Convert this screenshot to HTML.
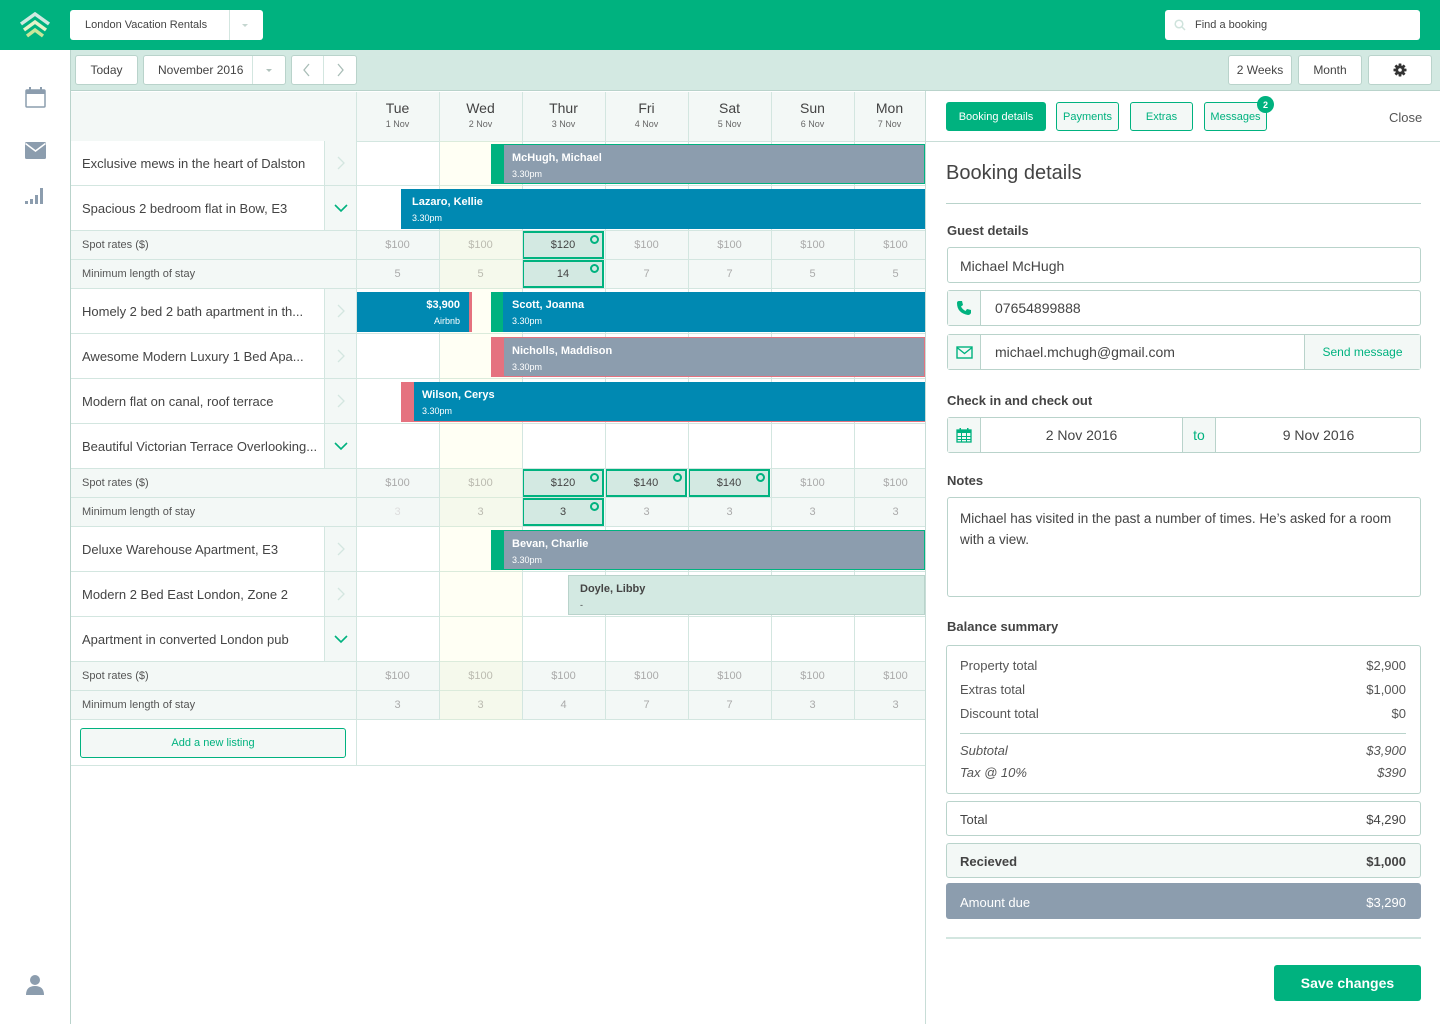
<!DOCTYPE html>
<html><head><meta charset="utf-8"><style>
*{box-sizing:border-box;margin:0;padding:0}
body{width:1440px;height:1024px;position:relative;overflow:hidden;font-family:"Liberation Sans",sans-serif;color:#444;background:#fff}
.a{position:absolute}
.btn{position:absolute;background:#fff;border:1px solid #b9d3cb;border-radius:3px;font-size:12px;color:#444;display:flex;align-items:center;justify-content:center}
.row{position:absolute;left:71px;width:854px;border-bottom:1px solid #d3e6e0}
.nm{position:absolute;left:0;top:0;width:254px;height:100%;background:#fff;font-size:13px;color:#444;padding-left:11px;display:flex;align-items:center;border-right:1px solid #d3e6e0;white-space:nowrap;overflow:hidden}
.ar{position:absolute;left:254px;top:0;width:31px;height:100%;background:#f3f8f6;display:flex;align-items:center;justify-content:center}
.sub{background:#f3f8f6}
.sub .lb{position:absolute;left:11px;top:0;height:100%;display:flex;align-items:center;font-size:11px;color:#555}
.vals{position:absolute;left:285px;top:0;height:100%;display:flex}
.vals span{width:83px;flex:none;display:flex;align-items:center;justify-content:center;font-size:11px;color:#aaa;position:relative}
.vals span.h{background:#d3e9e2;border:2px solid #00b27f;color:#444;height:28px;width:82px;margin-right:1px}
.vals span.h:after{content:"";position:absolute;right:3px;top:2px;width:5px;height:5px;border:2px solid #00b27f;border-radius:50%;background:#d3e9e2}
.bk{position:absolute;height:40px;color:#fff;padding-left:9px;font-size:11px;font-weight:bold;padding-top:7px}
.bk i{display:block;font-style:normal;font-weight:normal;font-size:9px;margin-top:5px}
.grey{background:#8c9dae}
.blue{background:#0089b2}
.tab{position:absolute;top:102px;height:29px;border:1px solid #00b27f;border-radius:3px;font-size:11px;color:#00b27f;background:#f3f8f6;display:flex;align-items:center;justify-content:center}
.lbl{position:absolute;left:947px;font-size:13px;font-weight:bold;color:#444}
.inp{position:absolute;left:947px;width:474px;border:1px solid #b9d3cb;border-radius:3px;background:#fff;font-size:14px;color:#444}
.ic{position:absolute;left:0;top:0;width:33px;height:100%;background:#f3f8f6;border-right:1px solid #b9d3cb;display:flex;align-items:center;justify-content:center}
.bl{position:absolute;left:960px;right:34px;font-size:13px;color:#555;display:flex;justify-content:space-between}
</style></head><body>

<div class="a" style="left:0;top:0;width:1440px;height:50px;background:#00b27f"></div>
<svg class="a" style="left:19px;top:12px" width="32" height="26" viewBox="0 0 32 26">
<path d="M2 12 L16 2 L30 12" fill="none" stroke="#cfe9e0" stroke-width="3.5"/>
<path d="M5 18 L16 10 L27 18" fill="none" stroke="#e6f3c8" stroke-width="3.5"/>
<path d="M8 24 L16 18 L24 24" fill="none" stroke="#c9e69a" stroke-width="3.5"/>
</svg>
<div class="btn" style="left:70px;top:10px;width:193px;height:30px;justify-content:flex-start;padding-left:15px;font-size:11px;border:none">London Vacation Rentals</div>
<div class="a" style="left:229px;top:10px;width:1px;height:30px;background:#d3e6e0"></div>
<div class="a" style="left:242px;top:24px;border-left:3px solid transparent;border-right:3px solid transparent;border-top:3px solid #c5d6d0"></div>
<div class="btn" style="left:1165px;top:10px;width:255px;height:30px;justify-content:flex-start;padding-left:30px;font-size:11px;border:none">Find a booking</div>
<svg class="a" style="left:1174px;top:19px" width="12" height="12"><circle cx="5" cy="5" r="3.8" fill="none" stroke="#cfe3dc" stroke-width="1.5"/><path d="M8 8 L11 11" stroke="#cfe3dc" stroke-width="1.5"/></svg>

<div class="a" style="left:70px;top:50px;width:1px;height:974px;background:#b9d3cb"></div>
<svg class="a" style="left:25px;top:86px" width="21" height="22" viewBox="0 0 21 22"><rect x="1" y="4" width="19" height="17" rx="1" fill="none" stroke="#8c9dae" stroke-width="1.5"/><rect x="1" y="4" width="19" height="4" fill="#8c9dae"/><rect x="4" y="1" width="2" height="5" fill="#8c9dae"/><rect x="15" y="1" width="2" height="5" fill="#8c9dae"/></svg>
<svg class="a" style="left:25px;top:142px" width="21" height="17" viewBox="0 0 21 17"><rect x="0" y="0" width="21" height="17" rx="1.5" fill="#8c9dae"/><path d="M0.5 1.5 L10.5 9 L20.5 1.5" fill="none" stroke="#fff" stroke-width="1.5"/></svg>
<svg class="a" style="left:25px;top:186px" width="21" height="18"><rect x="0" y="15" width="3" height="3" fill="#8c9dae"/><rect x="5" y="13" width="3" height="5" fill="#8c9dae"/><rect x="10" y="9" width="3" height="9" fill="#8c9dae"/><rect x="15" y="2" width="3" height="16" fill="#8c9dae"/></svg>
<svg class="a" style="left:25px;top:974px" width="20" height="22"><circle cx="10" cy="6" r="5" fill="#8c9dae"/><path d="M1 21 Q1 12 10 12 Q19 12 19 21 Z" fill="#8c9dae"/></svg>

<div class="a" style="left:71px;top:50px;width:1369px;height:41px;background:#d3e9e2;border-bottom:1px solid #b9d3cb"></div>
<div class="btn" style="left:75px;top:55px;width:63px;height:30px">Today</div>
<div class="btn" style="left:143px;top:55px;width:143px;height:30px;justify-content:flex-start;padding-left:14px">November 2016</div>
<div class="a" style="left:252px;top:56px;width:1px;height:28px;background:#d3e6e0"></div>
<div class="a" style="left:266px;top:69px;border-left:3px solid transparent;border-right:3px solid transparent;border-top:3px solid #b0c2bc"></div>
<div class="btn" style="left:291px;top:55px;width:66px;height:30px"></div>
<div class="a" style="left:323px;top:56px;width:1px;height:28px;background:#d3e6e0"></div>
<svg class="a" style="left:301px;top:63px" width="12" height="14"><path d="M8 1 L3 7 L8 13" fill="none" stroke="#a9bdb7" stroke-width="1.3"/></svg>
<svg class="a" style="left:335px;top:63px" width="12" height="14"><path d="M3 1 L8 7 L3 13" fill="none" stroke="#a9bdb7" stroke-width="1.3"/></svg>
<div class="btn" style="left:1228px;top:55px;width:64px;height:30px">2 Weeks</div>
<div class="btn" style="left:1298px;top:55px;width:64px;height:30px">Month</div>
<div class="btn" style="left:1368px;top:55px;width:64px;height:30px"><svg width="14" height="14" viewBox="0 0 14 14"><g fill="#333"><circle cx="7" cy="7" r="4.6"/><rect x="5.6" y="0.5" width="2.8" height="13" rx=".5"/><rect x="0.5" y="5.6" width="13" height="2.8" rx=".5"/><rect x="5.6" y="0.5" width="2.8" height="13" rx=".5" transform="rotate(45 7 7)"/><rect x="5.6" y="0.5" width="2.8" height="13" rx=".5" transform="rotate(-45 7 7)"/></g><circle cx="7" cy="7" r="1.8" fill="#fff"/></svg></div>

<div class="a" style="left:71px;top:92px;width:854px;height:50px;background:#f3f8f6;border-bottom:1px solid #d3e6e0"></div>
<div class="a" style="left:356px;top:100px;width:569px;display:flex;text-align:center">
<div style="width:83px"><div style="font-size:14px">Tue</div><div style="font-size:9px;color:#666;margin-top:3px">1 Nov</div></div>
<div style="width:83px"><div style="font-size:14px">Wed</div><div style="font-size:9px;color:#666;margin-top:3px">2 Nov</div></div>
<div style="width:83px"><div style="font-size:14px">Thur</div><div style="font-size:9px;color:#666;margin-top:3px">3 Nov</div></div>
<div style="width:83px"><div style="font-size:14px">Fri</div><div style="font-size:9px;color:#666;margin-top:3px">4 Nov</div></div>
<div style="width:83px"><div style="font-size:14px">Sat</div><div style="font-size:9px;color:#666;margin-top:3px">5 Nov</div></div>
<div style="width:83px"><div style="font-size:14px">Sun</div><div style="font-size:9px;color:#666;margin-top:3px">6 Nov</div></div>
<div style="width:71px"><div style="font-size:14px">Mon</div><div style="font-size:9px;color:#666;margin-top:3px">7 Nov</div></div>
</div>

<div class="row" style="top:141px;height:45px"><div class="nm">Exclusive mews in the heart of Dalston</div><div class="ar"><svg width="8" height="14"><path d="M1 1 L7 7 L1 13" fill="none" stroke="#d3e6e0" stroke-width="1.3"/></svg></div></div>
<div class="row" style="top:186px;height:45px"><div class="nm">Spacious 2 bedroom flat in Bow, E3</div><div class="ar"><svg width="14" height="9"><path d="M1 1 L7 7 L13 1" fill="none" stroke="#00b27f" stroke-width="1.6"/></svg></div></div>
<div class="row sub" style="top:231px;height:29px"><div class="lb">Spot rates ($)</div><div class="vals"><span>$100</span><span>$100</span><span class="h">$120</span><span>$100</span><span>$100</span><span>$100</span><span>$100</span></div></div>
<div class="row sub" style="top:260px;height:29px"><div class="lb">Minimum length of stay</div><div class="vals"><span>5</span><span>5</span><span class="h">14</span><span>7</span><span>7</span><span>5</span><span>5</span></div></div>
<div class="row" style="top:289px;height:45px"><div class="nm">Homely 2 bed 2 bath apartment in th...</div><div class="ar"><svg width="8" height="14"><path d="M1 1 L7 7 L1 13" fill="none" stroke="#d3e6e0" stroke-width="1.3"/></svg></div></div>
<div class="row" style="top:334px;height:45px"><div class="nm">Awesome Modern Luxury 1 Bed Apa...</div><div class="ar"><svg width="8" height="14"><path d="M1 1 L7 7 L1 13" fill="none" stroke="#d3e6e0" stroke-width="1.3"/></svg></div></div>
<div class="row" style="top:379px;height:45px"><div class="nm">Modern flat on canal, roof terrace</div><div class="ar"><svg width="8" height="14"><path d="M1 1 L7 7 L1 13" fill="none" stroke="#d3e6e0" stroke-width="1.3"/></svg></div></div>
<div class="row" style="top:424px;height:45px"><div class="nm">Beautiful Victorian Terrace Overlooking...</div><div class="ar"><svg width="14" height="9"><path d="M1 1 L7 7 L13 1" fill="none" stroke="#00b27f" stroke-width="1.6"/></svg></div></div>
<div class="row sub" style="top:469px;height:29px"><div class="lb">Spot rates ($)</div><div class="vals"><span>$100</span><span>$100</span><span class="h">$120</span><span class="h">$140</span><span class="h">$140</span><span>$100</span><span>$100</span></div></div>
<div class="row sub" style="top:498px;height:29px"><div class="lb">Minimum length of stay</div><div class="vals"><span style="color:#ddd">3</span><span>3</span><span class="h">3</span><span>3</span><span>3</span><span>3</span><span>3</span></div></div>
<div class="row" style="top:527px;height:45px"><div class="nm">Deluxe Warehouse Apartment, E3</div><div class="ar"><svg width="8" height="14"><path d="M1 1 L7 7 L1 13" fill="none" stroke="#d3e6e0" stroke-width="1.3"/></svg></div></div>
<div class="row" style="top:572px;height:45px"><div class="nm">Modern 2 Bed East London, Zone 2</div><div class="ar"><svg width="8" height="14"><path d="M1 1 L7 7 L1 13" fill="none" stroke="#d3e6e0" stroke-width="1.3"/></svg></div></div>
<div class="row" style="top:617px;height:45px"><div class="nm">Apartment in converted London pub</div><div class="ar"><svg width="14" height="9"><path d="M1 1 L7 7 L13 1" fill="none" stroke="#00b27f" stroke-width="1.6"/></svg></div></div>
<div class="row sub" style="top:662px;height:29px"><div class="lb">Spot rates ($)</div><div class="vals"><span>$100</span><span>$100</span><span>$100</span><span>$100</span><span>$100</span><span>$100</span><span>$100</span></div></div>
<div class="row sub" style="top:691px;height:29px"><div class="lb">Minimum length of stay</div><div class="vals"><span>3</span><span>3</span><span>4</span><span>7</span><span>7</span><span>3</span><span>3</span></div></div>
<div class="row" style="top:720px;height:46px;background:#fff"><div class="a" style="left:285px;top:0;width:1px;height:45px;background:#d3e6e0"></div></div>
<div class="a" style="left:80px;top:728px;width:266px;height:30px;border:1px solid #00b27f;border-radius:3px;background:#f3f8f6;color:#00b27f;font-size:11px;display:flex;align-items:center;justify-content:center">Add a new listing</div>

<div class="a" style="left:439px;top:141px;width:83px;height:579px;background:rgba(255,255,200,0.2)"></div>
<div class="a" style="left:356px;top:92px;width:569px;height:628px;background:repeating-linear-gradient(to right,#d3e6e0 0 1px,transparent 1px 83px)"></div>

<div class="bk grey" style="left:491px;top:144px;width:434px;border:1px solid #00b27f;padding-left:20px;box-shadow:inset 12px 0 0 #00b27f">McHugh, Michael<i>3.30pm</i></div>
<div class="bk blue" style="left:401px;top:189px;width:524px;padding-left:11px">Lazaro, Kellie<i>3.30pm</i></div>
<div class="bk blue" style="left:357px;top:292px;width:115px;text-align:right;padding-right:12px;box-shadow:inset -3px 0 0 #e5727f">$3,900<i>Airbnb</i></div>
<div class="bk blue" style="left:491px;top:292px;width:434px;padding-left:21px;box-shadow:inset 12px 0 0 #00b27f">Scott, Joanna<i>3.30pm</i></div>
<div class="bk grey" style="left:491px;top:337px;width:434px;border:1px solid #e5727f;padding-left:20px;box-shadow:inset 12px 0 0 #e5727f">Nicholls, Maddison<i>3.30pm</i></div>
<div class="bk blue" style="left:401px;top:382px;width:524px;border-bottom:1px solid #e5727f;padding-left:21px;box-shadow:inset 13px 0 0 #e5727f">Wilson, Cerys<i>3.30pm</i></div>
<div class="bk grey" style="left:491px;top:530px;width:434px;border:1px solid #00b27f;padding-left:20px;box-shadow:inset 12px 0 0 #00b27f">Bevan, Charlie<i>3.30pm</i></div>
<div class="bk" style="left:568px;top:575px;width:357px;background:#d3e9e2;border:1px solid #b9d3cb;color:#444;padding-left:11px">Doyle, Libby<i>-</i></div>

<div class="a" style="left:925px;top:91px;width:1px;height:933px;background:#c8ddd7"></div>
<div class="a" style="left:926px;top:141px;width:514px;height:1px;background:#c8ddd7"></div>
<div class="tab" style="left:946px;width:100px;background:#00b27f;color:#fff">Booking details</div>
<div class="tab" style="left:1056px;width:63px">Payments</div>
<div class="tab" style="left:1130px;width:63px">Extras</div>
<div class="tab" style="left:1204px;width:63px">Messages</div>
<div class="a" style="left:1257px;top:96px;width:17px;height:17px;border-radius:50%;background:#00b27f;color:#fff;font-size:9px;font-weight:bold;display:flex;align-items:center;justify-content:center">2</div>
<div class="a" style="left:1389px;top:110px;font-size:13px;color:#555">Close</div>
<div class="a" style="left:946px;top:162px;font-size:20px;color:#444">Booking details</div>
<div class="a" style="left:946px;top:203px;width:475px;height:1px;background:#b9d3cb"></div>

<div class="lbl" style="top:223px">Guest details</div>
<div class="inp" style="top:247px;height:36px;padding:10px 0 0 12px">Michael McHugh</div>
<div class="inp" style="top:290px;height:36px;padding:9px 0 0 47px"><div class="ic"><svg width="16" height="16" viewBox="0 0 16 16"><path d="M3 1 L6 1 L7 5 L5 6.5 Q6.5 9.5 9.5 11 L11 9 L15 10 L15 13 Q14 15 12 15 Q1 13 1 3 Q1 1 3 1Z" fill="#00b27f"/></svg></div>07654899888</div>
<div class="inp" style="top:334px;height:36px;padding:9px 0 0 47px"><div class="ic"><svg width="17" height="13"><rect x="1" y="1" width="15" height="11" fill="none" stroke="#00b27f" stroke-width="1.4"/><path d="M1 1.5 L8.5 7.5 L16 1.5" fill="none" stroke="#00b27f" stroke-width="1.4"/></svg></div>michael.mchugh@gmail.com<div class="a" style="left:356px;top:0;width:116px;height:34px;background:#f3f8f6;border-left:1px solid #b9d3cb;color:#00b27f;font-size:12px;display:flex;align-items:center;justify-content:center">Send message</div></div>

<div class="lbl" style="top:393px">Check in and check out</div>
<div class="inp" style="top:417px;height:36px"><div class="ic"><svg width="16" height="16"><rect x="1" y="3" width="14" height="12" fill="none" stroke="#00b27f" stroke-width="1.3"/><rect x="1" y="3" width="14" height="3" fill="#00b27f"/><path d="M5.5 6 V15 M10.5 6 V15 M1 9.5 H15 M1 12.5 H15" stroke="#00b27f" stroke-width="1"/><rect x="3.5" y="1" width="1.5" height="3" fill="#00b27f"/><rect x="11" y="1" width="1.5" height="3" fill="#00b27f"/></svg></div><div class="a" style="left:33px;top:9px;width:201px;text-align:center">2 Nov 2016</div><div class="a" style="left:234px;top:0;width:34px;height:34px;background:#f3f8f6;border-left:1px solid #b9d3cb;border-right:1px solid #b9d3cb;color:#00b27f;display:flex;align-items:center;justify-content:center">to</div><div class="a" style="left:268px;top:9px;width:205px;text-align:center">9 Nov 2016</div></div>

<div class="lbl" style="top:473px">Notes</div>
<div class="inp" style="top:497px;height:100px;padding:10px 12px;font-size:13.5px;line-height:21px">Michael has visited in the past a number of times. He’s asked for a room with a view.</div>

<div class="lbl" style="top:619px">Balance summary</div>
<div class="a" style="left:946px;top:645px;width:475px;height:149px;border:1px solid #b9d3cb;border-radius:3px"></div>
<div class="bl" style="top:658px"><span>Property total</span><span>$2,900</span></div>
<div class="bl" style="top:682px"><span>Extras total</span><span>$1,000</span></div>
<div class="bl" style="top:706px"><span>Discount total</span><span>$0</span></div>
<div class="a" style="left:960px;top:733px;width:446px;height:1px;background:#b9d3cb"></div>
<div class="bl" style="top:743px;font-style:italic"><span>Subtotal</span><span>$3,900</span></div>
<div class="bl" style="top:765px;font-style:italic"><span>Tax @ 10%</span><span>$390</span></div>
<div class="a" style="left:946px;top:801px;width:475px;height:35px;border:1px solid #b9d3cb;border-radius:3px"></div>
<div class="bl" style="top:812px;color:#444"><span>Total</span><span>$4,290</span></div>
<div class="a" style="left:946px;top:843px;width:475px;height:35px;border:1px solid #b9d3cb;border-radius:3px;background:#f3f8f6"></div>
<div class="bl" style="top:854px;color:#444;font-weight:bold"><span>Recieved</span><span>$1,000</span></div>
<div class="a" style="left:946px;top:883px;width:475px;height:36px;border-radius:3px;background:#8c9dae"></div>
<div class="bl" style="top:895px;color:#fff"><span>Amount due</span><span>$3,290</span></div>
<div class="a" style="left:946px;top:937px;width:475px;height:2px;background:#d3e6e0"></div>
<div class="a" style="left:1274px;top:965px;width:147px;height:36px;border-radius:3px;background:#00b27f;color:#fff;font-size:14px;font-weight:bold;display:flex;align-items:center;justify-content:center">Save changes</div>
</body></html>
